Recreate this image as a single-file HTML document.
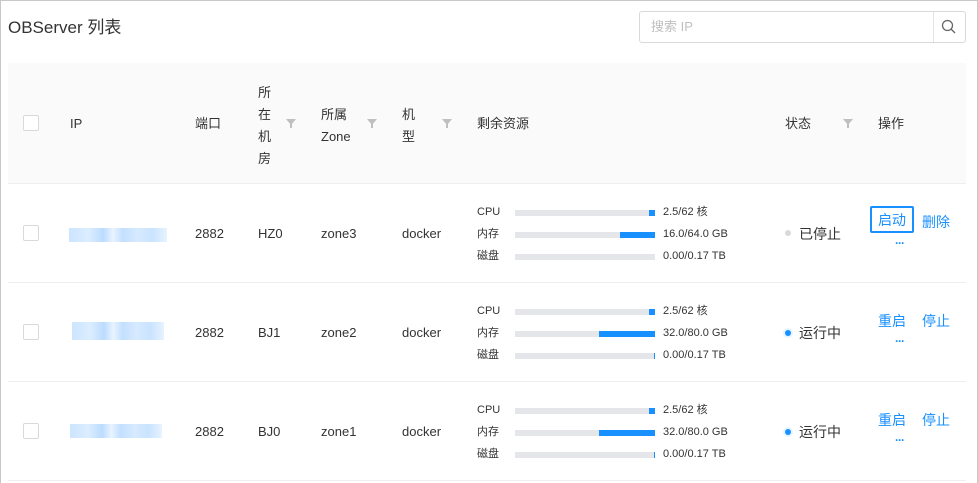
<!DOCTYPE html>
<html><head><meta charset="utf-8"><style>
*{margin:0;padding:0;box-sizing:border-box}
body{width:978px;height:483px;background:#fff;font-family:"Liberation Sans","Noto Sans CJK SC",sans-serif;color:#333;position:relative;overflow:hidden}
.frame{position:absolute;left:0;top:0;width:978px;height:483px;border:1px solid #c8c8c8;border-bottom:none}
.a{position:absolute;white-space:nowrap}
.t{font-size:13px;line-height:16px}
.s{font-size:11px;line-height:14px}
.cb{position:absolute;width:16px;height:16px;border:1px solid #d9d9d9;border-radius:2px;background:#fff}
.fi{position:absolute;width:0;height:0;border-left:5px solid transparent;border-right:5px solid transparent;border-top:6px solid #bfbfbf}
.fi:after{content:"";position:absolute;left:-1px;top:-1px;width:2px;height:4px;background:#bfbfbf}
.bar{position:absolute;left:515px;width:140px;height:6px;background:#e4e6ea}
.fill{position:absolute;right:0;top:0;height:6px;background:#1890ff}
.line{position:absolute;left:8px;width:958px;height:1px;background:#eeeeee}
.blue{color:#1890ff}
.dots{position:absolute;font-size:12px;line-height:10px;color:#1890ff;letter-spacing:-1px;font-weight:bold}
.ip{position:absolute;height:14px;background:linear-gradient(90deg,#c7e2ff,#d8ebff 20%,#b4d8ff 35%,#e6f2ff 45%,#bcdcff 55%,#d3e8ff 70%,#c3e0ff 85%,#e4f1ff);opacity:.9}
</style></head><body>
<div class="frame"></div>
<div class="a" style="left:8px;top:18px;font-size:17px;line-height:20px;color:#333">OBServer 列表</div>
<div class="a" style="left:639px;top:11px;width:327px;height:32px;border:1px solid #d9d9d9;border-radius:3px"></div>
<div class="a" style="left:933px;top:12px;width:1px;height:30px;background:#e4e4e4"></div>
<div class="a t" style="left:651px;top:19px;color:#bfbfbf">搜索 IP</div>
<svg class="a" style="left:940px;top:18px" width="18" height="18" viewBox="0 0 18 18"><circle cx="7.5" cy="7.5" r="5" fill="none" stroke="#666" stroke-width="1.3"/><line x1="11" y1="11" x2="15" y2="15" stroke="#666" stroke-width="1.3"/></svg>

<div class="a" style="left:8px;top:63px;width:958px;height:120px;background:#fafafa"></div>
<div class="line" style="top:183px"></div>
<div class="line" style="top:282px"></div>
<div class="line" style="top:381px"></div>
<div class="line" style="top:480px"></div>

<div class="cb" style="left:23px;top:115px"></div>
<div class="a t" style="left:70px;top:116px">IP</div>
<div class="a t" style="left:195px;top:116px">端口</div>
<div class="a t" style="left:258px;top:82px;line-height:22px;white-space:normal;width:14px">所<br>在<br>机<br>房</div>
<div class="fi" style="left:286px;top:119px"></div>
<div class="a t" style="left:321px;top:104px;line-height:22px">所属<br>Zone</div>
<div class="fi" style="left:367px;top:119px"></div>
<div class="a t" style="left:402px;top:104px;line-height:22px">机<br>型</div>
<div class="fi" style="left:442px;top:119px"></div>
<div class="a t" style="left:477px;top:116px">剩余资源</div>
<div class="a t" style="left:785px;top:116px">状态</div>
<div class="fi" style="left:843px;top:119px"></div>
<div class="a t" style="left:878px;top:116px">操作</div>

<!-- row1 -->
<div class="cb" style="left:23px;top:225px"></div>
<div class="ip" style="left:69px;top:228px;width:98px"></div>
<div class="a t" style="left:195px;top:226px">2882</div>
<div class="a t" style="left:258px;top:226px">HZ0</div>
<div class="a t" style="left:321px;top:226px">zone3</div>
<div class="a t" style="left:402px;top:226px">docker</div>
<div class="a s" style="left:477px;top:205px">CPU</div><div class="bar" style="top:210px"><div class="fill" style="width:6px"></div></div><div class="a s" style="left:663px;top:205px">2.5/62 核</div>
<div class="a s" style="left:477px;top:227px">内存</div><div class="bar" style="top:232px"><div class="fill" style="width:35px"></div></div><div class="a s" style="left:663px;top:227px">16.0/64.0 GB</div>
<div class="a s" style="left:477px;top:249px">磁盘</div><div class="bar" style="top:254px"></div><div class="a s" style="left:663px;top:249px">0.00/0.17 TB</div>
<div class="a" style="left:785px;top:230px;width:6px;height:6px;border-radius:50%;background:#d9d9d9"></div>
<div class="a t" style="left:799px;top:226px;font-size:14px">已停止</div>
<div class="a blue" style="left:870px;top:206px;width:44px;height:27px;border:2px solid #1890ff;border-radius:2px;padding:4px 0 0 6px;font-size:14px;line-height:16px">启动</div>
<div class="a blue" style="left:922px;top:214px;font-size:14px;line-height:16px">删除</div>
<div class="dots" style="left:895px;top:238px">···</div>

<!-- row2 -->
<div class="cb" style="left:23px;top:324px"></div>
<div class="ip" style="left:72px;top:322px;width:92px;height:18px"></div>
<div class="a t" style="left:195px;top:325px">2882</div>
<div class="a t" style="left:258px;top:325px">BJ1</div>
<div class="a t" style="left:321px;top:325px">zone2</div>
<div class="a t" style="left:402px;top:325px">docker</div>
<div class="a s" style="left:477px;top:304px">CPU</div><div class="bar" style="top:309px"><div class="fill" style="width:6px"></div></div><div class="a s" style="left:663px;top:304px">2.5/62 核</div>
<div class="a s" style="left:477px;top:326px">内存</div><div class="bar" style="top:331px"><div class="fill" style="width:56px"></div></div><div class="a s" style="left:663px;top:326px">32.0/80.0 GB</div>
<div class="a s" style="left:477px;top:348px">磁盘</div><div class="bar" style="top:353px"><div class="fill" style="width:1px"></div></div><div class="a s" style="left:663px;top:348px">0.00/0.17 TB</div>
<div class="a" style="left:783px;top:328px;width:10px;height:10px;border-radius:50%;background:#e6f4ff"></div>
<div class="a" style="left:785px;top:330px;width:6px;height:6px;border-radius:50%;background:#1890ff"></div>
<div class="a t" style="left:799px;top:325px;font-size:14px">运行中</div>
<div class="a t blue" style="left:878px;top:313px;font-size:14px">重启</div>
<div class="a t blue" style="left:922px;top:313px;font-size:14px">停止</div>
<div class="dots" style="left:895px;top:336px">···</div>

<!-- row3 -->
<div class="cb" style="left:23px;top:423px"></div>
<div class="ip" style="left:70px;top:424px;width:92px"></div>
<div class="a t" style="left:195px;top:424px">2882</div>
<div class="a t" style="left:258px;top:424px">BJ0</div>
<div class="a t" style="left:321px;top:424px">zone1</div>
<div class="a t" style="left:402px;top:424px">docker</div>
<div class="a s" style="left:477px;top:403px">CPU</div><div class="bar" style="top:408px"><div class="fill" style="width:6px"></div></div><div class="a s" style="left:663px;top:403px">2.5/62 核</div>
<div class="a s" style="left:477px;top:425px">内存</div><div class="bar" style="top:430px"><div class="fill" style="width:56px"></div></div><div class="a s" style="left:663px;top:425px">32.0/80.0 GB</div>
<div class="a s" style="left:477px;top:447px">磁盘</div><div class="bar" style="top:452px"><div class="fill" style="width:1px"></div></div><div class="a s" style="left:663px;top:447px">0.00/0.17 TB</div>
<div class="a" style="left:783px;top:427px;width:10px;height:10px;border-radius:50%;background:#e6f4ff"></div>
<div class="a" style="left:785px;top:429px;width:6px;height:6px;border-radius:50%;background:#1890ff"></div>
<div class="a t" style="left:799px;top:424px;font-size:14px">运行中</div>
<div class="a t blue" style="left:878px;top:412px;font-size:14px">重启</div>
<div class="a t blue" style="left:922px;top:412px;font-size:14px">停止</div>
<div class="dots" style="left:895px;top:435px">···</div>
</body></html>
